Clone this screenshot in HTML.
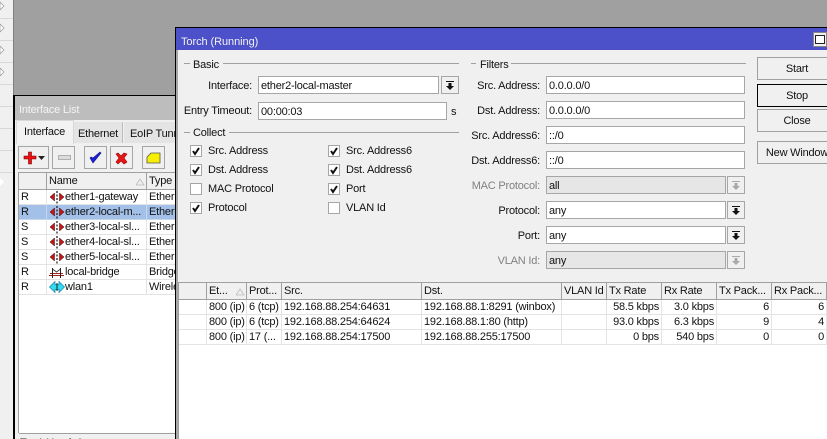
<!DOCTYPE html>
<html><head><meta charset="utf-8"><title>Torch</title>
<style>
html,body{margin:0;padding:0}
body{width:827px;height:439px;overflow:hidden;position:relative;background:#a0a0a0;font:11px/14px "Liberation Sans",sans-serif;letter-spacing:-.2px;color:#111}
div,span,svg{position:absolute;box-sizing:border-box}
.t{white-space:nowrap;margin-top:1px}
.r{text-align:right}
.f{background:#fff;border:1px solid #a6a6a6;height:18px;padding:2px 0 0 2px;white-space:nowrap}
.f.d{background:#e6e6e6}
.b{background:#f0f0f0;border:1px solid #a6a6a6}
.dd{width:18px;height:18px;background:#f0f0f0;border:1px solid #a6a6a6}
.c{width:12px;height:12px;background:#fff;border:1px solid #a6a6a6}
.ln{height:1px;background:#a0a0a0}
.btn{left:757px;width:80px;height:23px;background:#f0f0f0;border:1px solid #a0a0a0;text-align:center;line-height:22px;white-space:nowrap}
.h{background:#f0f0f0;border-right:1px solid #a0a0a0;border-bottom:1px solid #a0a0a0;border-top:1px solid #a0a0a0;height:18px;padding-left:2px;white-space:nowrap;line-height:17px}
.cell{height:15px;border-right:1px solid #e3e3e3;border-bottom:1px solid #e3e3e3;white-space:nowrap;padding:0 2px;line-height:15px;overflow:hidden}
</style></head><body>

<!-- left strip -->
<div style="left:0;top:0;width:14px;height:439px;background:#f0f0f0;border-right:1px solid #808080"></div>
<div style="left:0;top:18px;width:13px;height:1px;background:#d8d8d8"></div>
<div style="left:0;top:40px;width:13px;height:1px;background:#d8d8d8"></div>
<div style="left:0;top:62px;width:13px;height:1px;background:#d8d8d8"></div>
<div style="left:0;top:84px;width:13px;height:1px;background:#d8d8d8"></div>
<div style="left:0;top:106px;width:13px;height:1px;background:#d8d8d8"></div>
<div style="left:0;top:128px;width:13px;height:1px;background:#d8d8d8"></div>
<div style="left:0;top:150px;width:13px;height:1px;background:#d8d8d8"></div>
<div style="left:0;top:172px;width:13px;height:1px;background:#d8d8d8"></div>
<svg style="left:0;top:0" width="13" height="190" fill="#fff" stroke="#999" stroke-width=".7"><path d="M0 2 L4 6 L0 10Z"/><path d="M0 24 L4 28 L0 32Z"/><path d="M0 46 L4 50 L0 54Z"/><path d="M0 68 L4 72 L0 76Z"/><path d="M0 178 L4 182 L0 186Z" stroke="none"/></svg>

<!-- Interface list window -->
<div style="left:13px;top:95px;width:170px;height:344px;background:#f0f0f0;border:1px solid #000;border-width:1px 0 0 2px;border-color:#000"></div>
<div style="left:15px;top:96px;width:165px;height:24px;background:#bdbdbd"></div>
<div class="t" style="left:19px;top:102px;color:#f4f4f4">Interface List</div>
<div style="left:74px;top:122px;width:49px;height:21px;background:#e4e4e4;border-right:1px solid #bbb"></div>
<div style="left:124px;top:122px;width:55px;height:21px;background:#e4e4e4"></div>
<div style="left:16px;top:120px;width:58px;height:24px;background:#f2f2f2;border:1px solid #d8d8d8;border-bottom:none"></div>
<div class="t" style="left:24px;top:124px">Interface</div>
<div class="t" style="left:78px;top:126px">Ethernet</div>
<div class="t" style="left:130px;top:126px">EoIP Tunnel</div>

<div class="b" style="left:18px;top:146px;width:31px;height:23px"></div>
<div class="b" style="left:52px;top:146px;width:23px;height:23px"></div>
<div class="b" style="left:84px;top:146px;width:23px;height:23px"></div>
<div class="b" style="left:110px;top:146px;width:23px;height:23px"></div>
<div class="b" style="left:142px;top:146px;width:23px;height:23px"></div>
<svg style="left:18px;top:146px" width="160" height="23">
<path d="M6 10h4.500V6h3v4H18v3h-4.500v5h-3v-5H6z" fill="#ee1111" stroke="#700" stroke-width=".6"/>
<path d="M20 10h7l-3.500 4z" fill="#222"/>
<rect x="40.500" y="9.500" width="12" height="4" fill="#dcdcdc" stroke="#b0b0b0"/>
<path d="M72 12l3 5 8-10-1-1-7 6-2-1z" fill="#1a22d8" stroke="#101080" stroke-width=".6"/>
<path d="M98 8l2-1 3 3 3-3 3 1-3 4 3 4-3 2-3-3-3 3-2-2 3-4z" fill="#e81515" stroke="#900" stroke-width=".6"/>
<path d="M129 11l4-4h9v10h-13z" fill="#f6f000" stroke="#555" stroke-width=".8"/>
</svg>

<div style="left:18px;top:172px;width:160px;height:261px;background:#fff;border:1px solid #a0a0a0;border-width:0 0 0 1px"></div>
<div class="h" style="left:19px;top:172px;width:28px"></div>
<div class="h" style="left:47px;top:172px;width:100px">Name</div>
<div class="h" style="left:147px;top:172px;width:32px">Type</div>
<svg style="left:136px;top:178px" width="9" height="8"><path d="M4 1L8 7H0z" fill="#eee" stroke="#bbb" stroke-width=".8"/></svg>
<div style="left:19px;top:205px;width:160px;height:15px;background:#a3c0e8"></div>

<div class="cell" style="left:19px;top:190px;width:28px">R</div><div class="cell" style="left:47px;top:190px;width:100px;padding-left:18px">ether1-gateway</div><div class="cell" style="left:147px;top:190px;width:32px">Ethernet</div>
<div class="cell" style="left:19px;top:205px;width:28px;border-color:#c8d6ea">R</div><div class="cell" style="left:47px;top:205px;width:100px;padding-left:18px;border-color:#c8d6ea">ether2-local-m...</div><div class="cell" style="left:147px;top:205px;width:32px;border-color:#c8d6ea">Ethernet</div>
<div class="cell" style="left:19px;top:220px;width:28px">S</div><div class="cell" style="left:47px;top:220px;width:100px;padding-left:18px">ether3-local-sl...</div><div class="cell" style="left:147px;top:220px;width:32px">Ethernet</div>
<div class="cell" style="left:19px;top:235px;width:28px">S</div><div class="cell" style="left:47px;top:235px;width:100px;padding-left:18px">ether4-local-sl...</div><div class="cell" style="left:147px;top:235px;width:32px">Ethernet</div>
<div class="cell" style="left:19px;top:250px;width:28px">S</div><div class="cell" style="left:47px;top:250px;width:100px;padding-left:18px">ether5-local-sl...</div><div class="cell" style="left:147px;top:250px;width:32px">Ethernet</div>
<div class="cell" style="left:19px;top:265px;width:28px">R</div><div class="cell" style="left:47px;top:265px;width:100px;padding-left:18px">local-bridge</div><div class="cell" style="left:147px;top:265px;width:32px">Bridge</div>
<div class="cell" style="left:19px;top:280px;width:28px">R</div><div class="cell" style="left:47px;top:280px;width:100px;padding-left:18px">wlan1</div><div class="cell" style="left:147px;top:280px;width:32px">Wireless</div>

<svg style="left:49px;top:189px" width="17" height="105">
<g><path d="M1 8l4.500-4v8zM15 8l-4.500-4v8z" fill="#c01818" stroke="#400" stroke-width=".5"/><path d="M8 2v13" stroke="#222" stroke-dasharray="2 1.500" stroke-width="1.300"/></g>
<g transform="translate(0,15)"><path d="M1 8l4.500-4v8zM15 8l-4.500-4v8z" fill="#c01818" stroke="#400" stroke-width=".5"/><path d="M8 2v13" stroke="#222" stroke-dasharray="2 1.500" stroke-width="1.300"/></g>
<g transform="translate(0,30)"><path d="M1 8l4.500-4v8zM15 8l-4.500-4v8z" fill="#c01818" stroke="#400" stroke-width=".5"/><path d="M8 2v13" stroke="#222" stroke-dasharray="2 1.500" stroke-width="1.300"/></g>
<g transform="translate(0,45)"><path d="M1 8l4.500-4v8zM15 8l-4.500-4v8z" fill="#c01818" stroke="#400" stroke-width=".5"/><path d="M8 2v13" stroke="#222" stroke-dasharray="2 1.500" stroke-width="1.300"/></g>
<g transform="translate(0,60)"><path d="M1 8l4.500-4v8zM15 8l-4.500-4v8z" fill="#c01818" stroke="#400" stroke-width=".5"/><path d="M8 2v13" stroke="#222" stroke-dasharray="2 1.500" stroke-width="1.300"/></g>
<g transform="translate(0,75)" fill="none" stroke-width="1"><path d="M0 11.500h15M1 9.500h13" stroke="#a02020"/><path d="M3.500 4v10M11.500 4v10" stroke="#222"/><path d="M3.500 5l4 3 4-3" stroke="#444"/></g>
<g transform="translate(0,90)"><path d="M.5 8L6 2.500v3h4v-3L15.500 8 10 13.500v-3H6v3z" fill="#30dcf0" stroke="#1a80a8" stroke-width=".7"/><path d="M8 4v8" stroke="#222" stroke-width="1"/></g>
</svg>

<div style="left:19px;top:433px;width:160px;height:1px;background:#a0a0a0"></div>
<div style="left:19px;top:434px;width:160px;height:5px;background:#f0f0f0"></div>
<div style="left:20px;top:436px;height:3px;overflow:hidden;white-space:nowrap;color:#222">Tx: 1 Used: 1</div>

<!-- Torch window -->
<div style="left:175px;top:27px;width:652px;height:412px;background:#f0f0f0;border-left:1px solid #000;border-top:1px solid #000"></div>
<div style="left:176px;top:29px;width:2px;height:410px;background:#a8a8a8"></div>
<div style="left:176px;top:28px;width:651px;height:22px;background:#4c50c9"></div>
<div class="t" style="left:181px;top:34px;color:#f2f2f2;letter-spacing:-.07px">Torch (Running)</div>
<div style="left:813px;top:32px;width:14px;height:15px;background:#f0f0f0;border:1px solid #888"></div>
<div style="left:815px;top:35px;width:10px;height:9px;background:#fff;border:1px solid #222"></div>

<!-- Basic -->
<div class="ln" style="left:184px;top:63px;width:6px"></div>
<div class="t" style="left:193px;top:57px">Basic</div>
<div class="ln" style="left:223px;top:63px;width:236px"></div>
<div class="t r" style="left:180px;top:78px;width:72px">Interface:</div>
<div class="f" style="left:258px;top:76px;width:181px">ether2-local-master</div>
<div class="dd" style="left:441px;top:76px"></div>
<div class="t r" style="left:176px;top:103px;width:76px">Entry Timeout:</div>
<div class="f" style="left:258px;top:102px;width:189px">00:00:03</div>
<div class="t" style="left:451px;top:104px">s</div>

<!-- Collect -->
<div class="ln" style="left:184px;top:132px;width:6px"></div>
<div class="t" style="left:193px;top:125px">Collect</div>
<div class="ln" style="left:229px;top:132px;width:230px"></div>
<div class="c" style="left:190px;top:145px"></div><div class="t" style="left:208px;top:143px">Src. Address</div>
<div class="c" style="left:190px;top:164px"></div><div class="t" style="left:208px;top:162px">Dst. Address</div>
<div class="c" style="left:190px;top:183px"></div><div class="t" style="left:208px;top:181px">MAC Protocol</div>
<div class="c" style="left:190px;top:202px"></div><div class="t" style="left:208px;top:200px">Protocol</div>
<div class="c" style="left:328px;top:145px"></div><div class="t" style="left:346px;top:143px">Src. Address6</div>
<div class="c" style="left:328px;top:164px"></div><div class="t" style="left:346px;top:162px">Dst. Address6</div>
<div class="c" style="left:328px;top:183px"></div><div class="t" style="left:346px;top:181px">Port</div>
<div class="c" style="left:328px;top:202px"></div><div class="t" style="left:346px;top:200px">VLAN Id</div>
<svg style="left:190px;top:145px" width="150" height="70" fill="none" stroke="#111" stroke-width="2">
<path d="M3 6l2 3 4-6M3 25l2 3 4-6M3 63l2 3 4-6M141 6l2 3 4-6M141 25l2 3 4-6M141 44l2 3 4-6"/>
</svg>

<!-- Filters -->
<div class="ln" style="left:471px;top:63px;width:5px"></div>
<div class="t" style="left:480px;top:57px">Filters</div>
<div class="ln" style="left:511px;top:63px;width:235px"></div>
<div class="t r" style="left:460px;top:78px;width:80px">Src. Address:</div>
<div class="t r" style="left:460px;top:103px;width:80px">Dst. Address:</div>
<div class="t r" style="left:460px;top:128px;width:80px">Src. Address6:</div>
<div class="t r" style="left:460px;top:153px;width:80px">Dst. Address6:</div>
<div class="t r" style="left:460px;top:178px;width:80px;color:#808080">MAC Protocol:</div>
<div class="t r" style="left:460px;top:203px;width:80px">Protocol:</div>
<div class="t r" style="left:460px;top:228px;width:80px">Port:</div>
<div class="t r" style="left:460px;top:253px;width:80px;color:#808080">VLAN Id:</div>
<div class="f" style="left:546px;top:76px;width:199px">0.0.0.0/0</div>
<div class="f" style="left:546px;top:101px;width:199px">0.0.0.0/0</div>
<div class="f" style="left:546px;top:126px;width:199px">::/0</div>
<div class="f" style="left:546px;top:151px;width:199px">::/0</div>
<div class="f d" style="left:546px;top:176px;width:180px">all</div>
<div class="f" style="left:546px;top:201px;width:180px">any</div>
<div class="f" style="left:546px;top:226px;width:180px">any</div>
<div class="f d" style="left:546px;top:251px;width:180px">any</div>
<div class="dd" style="left:727px;top:176px"></div>
<div class="dd" style="left:727px;top:201px"></div>
<div class="dd" style="left:727px;top:226px"></div>
<div class="dd" style="left:727px;top:251px"></div>
<svg style="left:441px;top:76px" width="300" height="190">
<path d="M5 5h8v1H5zM9 14L5 10h2.500V7h3v3H13z" fill="#111"/>
<g transform="translate(286,100)"><path d="M5 5h8v1H5zM9 14L5 10h2.500V7h3v3H13z" fill="#a8a8a8"/></g>
<g transform="translate(286,125)"><path d="M5 5h8v1H5zM9 14L5 10h2.500V7h3v3H13z" fill="#111"/></g>
<g transform="translate(286,150)"><path d="M5 5h8v1H5zM9 14L5 10h2.500V7h3v3H13z" fill="#111"/></g>
</svg>
<svg style="left:727px;top:251px" width="18" height="18"><path d="M5 5h8v1H5zM9 14L5 10h2.500V7h3v3H13z" fill="#a8a8a8"/></svg>

<!-- Buttons -->
<div class="btn" style="top:57px">Start</div>
<div class="btn" style="top:84px;border-color:#000">Stop</div>
<div class="btn" style="top:109px">Close</div>
<div class="btn" style="top:141px">New Window</div>

<!-- Table -->
<div style="left:178px;top:282px;width:649px;height:157px;background:#fff;border-left:1px solid #a0a0a0"></div>
<div class="h" style="left:179px;top:282px;width:28px"></div>
<div class="h" style="left:207px;top:282px;width:40px">Et...</div>
<div class="h" style="left:247px;top:282px;width:35px">Prot...</div>
<div class="h" style="left:282px;top:282px;width:140px">Src.</div>
<div class="h" style="left:422px;top:282px;width:140px">Dst.</div>
<div class="h" style="left:562px;top:282px;width:45px">VLAN Id</div>
<div class="h" style="left:607px;top:282px;width:55px">Tx Rate</div>
<div class="h" style="left:662px;top:282px;width:55px">Rx Rate</div>
<div class="h" style="left:717px;top:282px;width:55px">Tx Pack...</div>
<div class="h" style="left:772px;top:282px;width:55px">Rx Pack...</div>
<svg style="left:236px;top:288px" width="9" height="8"><path d="M4 1L8 7H0z" fill="#eee" stroke="#bbb" stroke-width=".8"/></svg>

<div class="cell" style="left:179px;top:300px;width:28px"></div><div class="cell" style="left:207px;top:300px;width:40px">800 (ip)</div><div class="cell" style="left:247px;top:300px;width:35px">6 (tcp)</div><div class="cell" style="left:282px;top:300px;width:140px">192.168.88.254:64631</div><div class="cell" style="left:422px;top:300px;width:140px">192.168.88.1:8291 (winbox)</div><div class="cell" style="left:562px;top:300px;width:45px"></div><div class="cell r" style="left:607px;top:300px;width:55px">58.5 kbps</div><div class="cell r" style="left:662px;top:300px;width:55px">3.0 kbps</div><div class="cell r" style="left:717px;top:300px;width:55px">6</div><div class="cell r" style="left:772px;top:300px;width:55px">6</div>

<div class="cell" style="left:179px;top:315px;width:28px"></div><div class="cell" style="left:207px;top:315px;width:40px">800 (ip)</div><div class="cell" style="left:247px;top:315px;width:35px">6 (tcp)</div><div class="cell" style="left:282px;top:315px;width:140px">192.168.88.254:64624</div><div class="cell" style="left:422px;top:315px;width:140px">192.168.88.1:80 (http)</div><div class="cell" style="left:562px;top:315px;width:45px"></div><div class="cell r" style="left:607px;top:315px;width:55px">93.0 kbps</div><div class="cell r" style="left:662px;top:315px;width:55px">6.3 kbps</div><div class="cell r" style="left:717px;top:315px;width:55px">9</div><div class="cell r" style="left:772px;top:315px;width:55px">4</div>

<div class="cell" style="left:179px;top:330px;width:28px"></div><div class="cell" style="left:207px;top:330px;width:40px">800 (ip)</div><div class="cell" style="left:247px;top:330px;width:35px">17 (...</div><div class="cell" style="left:282px;top:330px;width:140px">192.168.88.254:17500</div><div class="cell" style="left:422px;top:330px;width:140px">192.168.88.255:17500</div><div class="cell" style="left:562px;top:330px;width:45px"></div><div class="cell r" style="left:607px;top:330px;width:55px">0 bps</div><div class="cell r" style="left:662px;top:330px;width:55px">540 bps</div><div class="cell r" style="left:717px;top:330px;width:55px">0</div><div class="cell r" style="left:772px;top:330px;width:55px">0</div>

</body></html>
